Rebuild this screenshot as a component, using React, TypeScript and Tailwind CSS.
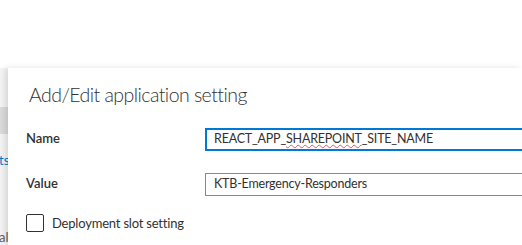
import React from 'react';

export default function App() {
  return (
    <div className="w-[522px] h-[245px] overflow-hidden bg-white flex flex-col font-['Lato',sans-serif] text-[#323130]">
      <div className="h-[68px] shrink-0 bg-white" />
      <div className="flex flex-1 min-h-0">
        {/* page behind the blade */}
        <div className="w-[8px] shrink-0 bg-[#f4f4f4] flex flex-col text-[13px] leading-none overflow-hidden">
          <div className="h-[39px]" />
          <div className="h-[27px] bg-[#dcdbdc]" />
          <div className="h-[20px]" />
          <div className="text-[#0078d4] -ml-[1px]">ts</div>
          <div className="flex-1" />
          <div className="text-[#605e5c] -ml-[1px] mb-[1px]">al</div>
        </div>
        {/* blade */}
        <div className="flex-1 bg-white shadow-[-3px_0_6px_rgba(0,0,0,0.12)] relative pl-[18px] pt-[17px]">
          <h2 className="text-[19.5px] font-light leading-none text-[#323130] ml-[3px] tracking-[-0.55px]">
            Add/Edit application setting
          </h2>
          <div className="mt-[23px] flex items-center h-[23px]">
            <label className="w-[179px] text-[13px] font-semibold">Name</label>
            <div className="flex-1 h-[23px] border-2 border-[#0078d4] border-r-0 flex items-center pl-[7px] text-[12.5px] tracking-[-0.2px]">
              <span>REACT_APP_</span>
              <span className="underline decoration-wavy decoration-[#e81123]/70 decoration-[1px] underline-offset-[1px]">SHAREPOINT</span>
              <span>_SITE_NAME</span>
            </div>
          </div>
          <div className="mt-[22px] flex items-center h-[23px]">
            <label className="w-[179px] text-[13px] font-semibold">Value</label>
            <div className="flex-1 h-[23px] border border-[#8a8886] border-r-0 flex items-center pl-[8px] text-[12.5px] tracking-[-0.2px]">
              KTB-Emergency-Responders
            </div>
          </div>
          <div className="mt-[18px] flex items-center gap-[8px]">
            <div className="w-[18px] h-[18px] border border-[#323130] rounded-[2px]" />
            <span className="text-[13px] tracking-[-0.2px]">Deployment slot setting</span>
          </div>
        </div>
      </div>
    </div>
  );
}
